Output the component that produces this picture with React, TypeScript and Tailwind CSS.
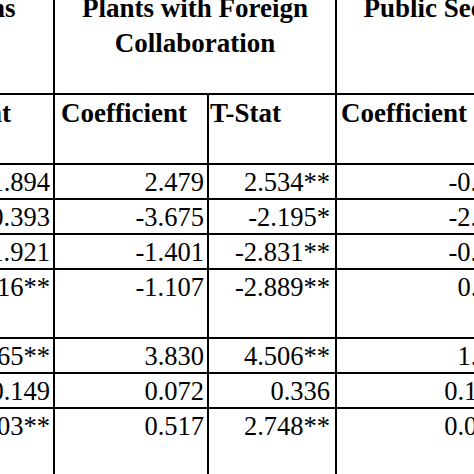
import React from "react";

const rows: string[][] = [
  ["1.327", "1.894", "2.479", "2.534**", "-0.215"],
  ["-0.412", "-0.393", "-3.675", "-2.195*", "-2.403"],
  ["-0.586", "-1.921", "-1.401", "-2.831**", "-0.318"],
  ["-1.204", "-3.116**", "-1.107", "-2.889**", "0.542"],
  ["2.917", "5.265**", "3.830", "4.506**", "1.274"],
  ["0.028", "0.149", "0.072", "0.336", "0.163*"],
  ["0.394", "3.103**", "0.517", "2.748**", "0.051*"],
];

const padR = ["pr-[3px]", "pr-[3px]", "pr-[3px]", "pr-[5px]", "pr-[3px]"];

export default function App() {
  return (
    <div className="w-[474px] h-[474px] overflow-hidden bg-white font-['Liberation_Serif','Times_New_Roman',serif] text-black">
      <div className="-ml-[216px] -mt-[9px] w-max grid gap-[2px] bg-black grid-cols-[152px_115px_152px_126px_183px_100px] grid-rows-[102px_68px_33px_33px_33px_67px_33px_33px_80px]">
        {/* group headers */}
        <div className="col-span-2 bg-white text-center font-bold text-[27px] leading-[35px]">All Observations</div>
        <div className="col-span-2 bg-white text-center font-bold text-[27px] leading-[35px]">
          Plants with Foreign
          <br />
          Collaboration
        </div>
        <div className="col-span-2 bg-white text-center font-bold text-[27px] leading-[35px]">Public Sector Plants</div>

        {/* sub headers */}
        <div className="bg-white font-bold text-[27px] leading-[35px] pt-[1px] pl-[6px]">Coefficient</div>
        <div className="bg-white font-bold text-[27px] leading-[35px] pt-[1px] pl-[2px]">T-Stat</div>
        <div className="bg-white font-bold text-[27px] leading-[35px] pt-[1px] pl-[6px]">Coefficient</div>
        <div className="bg-white font-bold text-[27px] leading-[35px] pt-[1px] pl-[1px]">T-Stat</div>
        <div className="bg-white font-bold text-[27px] leading-[35px] pt-[1px] pl-[4px]">Coefficient</div>
        <div className="bg-white font-bold text-[27px] leading-[35px] pt-[1px] pl-[1px]">T-Stat</div>

        {rows.map((r, i) => (
          <React.Fragment key={i}>
            {r.map((v, j) => (
              <div key={j} className={`bg-white text-right text-[26.5px] leading-[35px] ${padR[j]}`}>
                {v}
              </div>
            ))}
            <div className="bg-white text-right text-[26.5px] leading-[35px] pr-[3px]">
              {["0.842", "-3.017**", "-0.955", "1.106", "2.315*", "0.744", "0.213"][i]}
            </div>
          </React.Fragment>
        ))}
      </div>
    </div>
  );
}
